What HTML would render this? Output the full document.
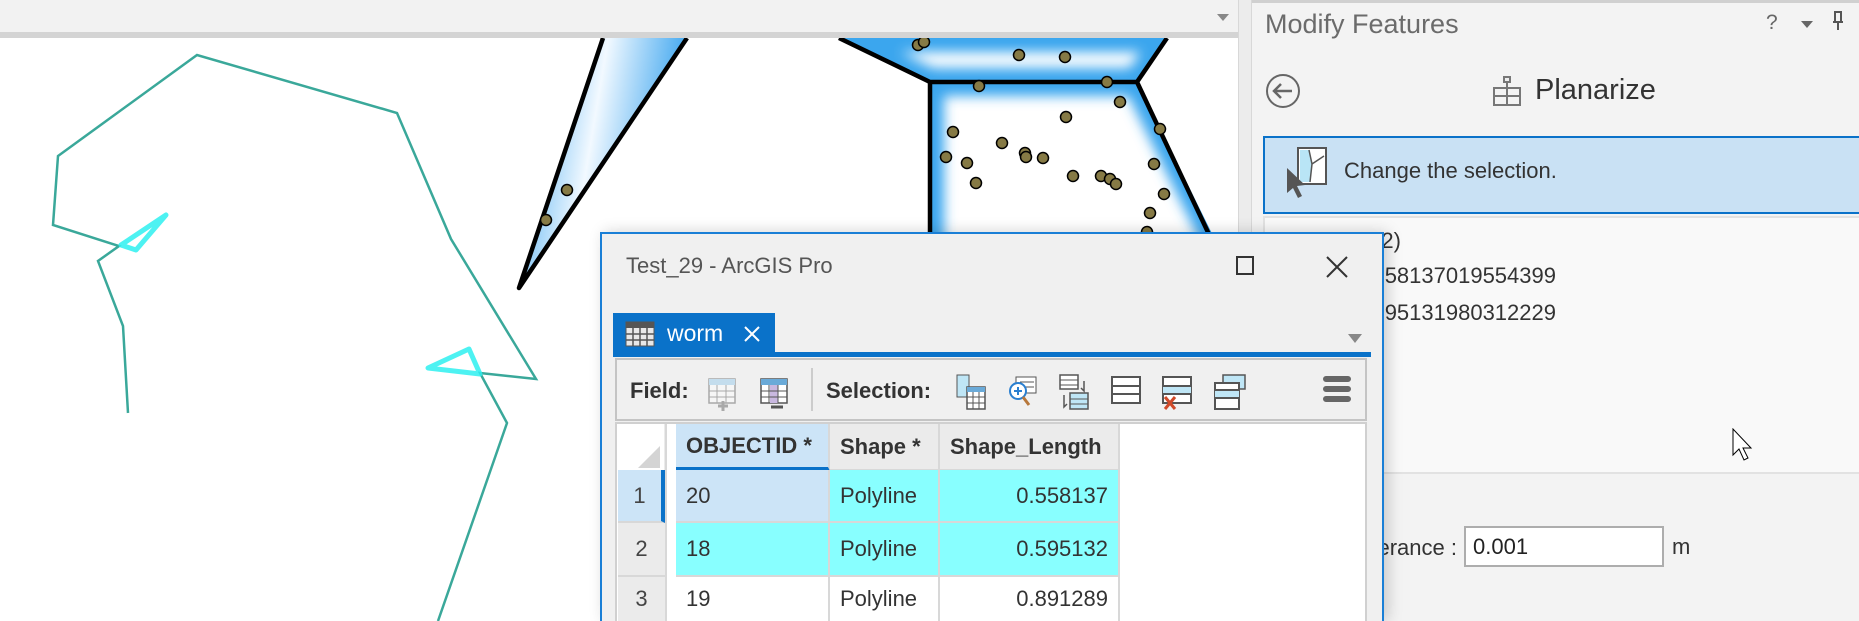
<!DOCTYPE html>
<html style="height:621px;overflow:hidden"><head><meta charset="utf-8"><style>
*{margin:0;padding:0;box-sizing:border-box}
body{width:1859px;height:621px;overflow:hidden;background:#fff;font-family:"Liberation Sans",sans-serif;position:relative}
.a{position:absolute}
.t{position:absolute;white-space:nowrap;line-height:1}
</style></head><body>
<!-- map -->
<svg class="a" style="left:0;top:0" width="1240" height="621" viewBox="0 0 1240 621">
<defs>
<clipPath id="c2"><polygon points="839,38 930,82 1137,82 1167,38"/></clipPath>
<clipPath id="c3"><polygon points="930,82 1137,82 1240,290 1240,621 930,621"/></clipPath>
<filter id="bl"><feGaussianBlur stdDeviation="6"/></filter>
<linearGradient id="sp" x1="0" y1="0" x2="1" y2="0.25"><stop offset="0" stop-color="#2f9fee"/><stop offset=".5" stop-color="#f2f9ff"/><stop offset="1" stop-color="#2f9fee"/></linearGradient>
</defs>
<rect width="1240" height="621" fill="#fff"/>
<polygon points="603,38 687,38 519,288" fill="url(#sp)"/>
<g clip-path="url(#c2)"><polygon points="839,38 930,82 1137,82 1167,38" fill="none" stroke="#3aa6ee" stroke-width="28" filter="url(#bl)"/></g>
<g clip-path="url(#c3)"><polygon points="930,82 1137,82 1240,290 1240,621 930,621" fill="none" stroke="#3aa6ee" stroke-width="28" filter="url(#bl)"/></g>
<g fill="none" stroke="#000" stroke-width="4.5" stroke-linejoin="round">
<polyline points="603,38 519,288 687,38"/>
<polyline points="839,38 930,82 1137,82 1167,38"/>
<polyline points="930,621 930,82"/>
<polyline points="1137,82 1240,300"/>
</g>
<g fill="#867a45" stroke="#000" stroke-width="1.5">
<circle cx="567" cy="190" r="5.5"/><circle cx="546" cy="220" r="5.5"/>
<circle cx="918" cy="45" r="5.5"/><circle cx="924" cy="42" r="5.5"/><circle cx="1019" cy="55" r="5.5"/><circle cx="1065" cy="57" r="5.5"/>
<circle cx="979" cy="86" r="5.5"/><circle cx="1107" cy="82" r="5.5"/><circle cx="1120" cy="102" r="5.5"/><circle cx="1066" cy="117" r="5.5"/>
<circle cx="1160" cy="129" r="5.5"/><circle cx="953" cy="132" r="5.5"/><circle cx="1002" cy="143" r="5.5"/><circle cx="946" cy="157" r="5.5"/>
<circle cx="1025" cy="153" r="5.5"/><circle cx="1026" cy="157" r="5.5"/><circle cx="1043" cy="158" r="5.5"/><circle cx="967" cy="163" r="5.5"/>
<circle cx="1154" cy="164" r="5.5"/><circle cx="1073" cy="176" r="5.5"/><circle cx="1101" cy="176" r="5.5"/><circle cx="1110" cy="179" r="5.5"/>
<circle cx="1116" cy="184" r="5.5"/><circle cx="976" cy="183" r="5.5"/><circle cx="1164" cy="194" r="5.5"/><circle cx="1150" cy="213" r="5.5"/><circle cx="1147" cy="232" r="5.5"/>
</g>
<polyline points="128,413 123,326 98,261 119,246 53,225 58,156 197,55 397,113 451,239 536,379 480,373 507,423 438,621" fill="none" stroke="#3aa89a" stroke-width="2.5"/>
<g fill="none" stroke="#2ef0f0" stroke-width="5" stroke-linejoin="round" opacity=".85">
<polygon points="166,215 121,245 136,250"/>
<polygon points="469,349 428,368 480,374"/>
</g>
<rect x="0" y="0" width="1240" height="32" fill="#f2f2f2"/>
<rect x="0" y="32" width="1240" height="6" fill="#d4d4d4"/>
<polygon points="1217,14 1229,14 1223,21" fill="#888"/>
</svg>
<div class="a" style="left:1238px;top:0;width:14px;height:621px;background:#ececec;border-left:1px solid #d8d8d8;border-right:1px solid #d8d8d8"></div>
<!-- right panel -->
<div class="a" style="left:1252px;top:0;width:607px;height:621px;background:#f3f3f3;border-top:3px solid #d0d0d0"></div>
<div class="t" style="left:1265px;top:11px;font-size:27px;color:#6b6b6b">Modify Features</div>
<div class="t" style="left:1766px;top:12px;font-size:21px;color:#666">?</div>
<div class="a" style="left:1801px;top:21px;width:0;height:0;border-left:6px solid transparent;border-right:6px solid transparent;border-top:7px solid #666"></div>
<svg class="a" style="left:1830px;top:10px" width="16" height="22"><path d="M4 2h8M5 2v10M11 2v10M3 12h10M8 12v8" stroke="#555" stroke-width="2" fill="none"/></svg>
<svg class="a" style="left:1265px;top:73px" width="36" height="36"><circle cx="18" cy="18" r="16" fill="none" stroke="#666" stroke-width="2"/><path d="M27 18H10M16 11l-7 7 7 7" fill="none" stroke="#666" stroke-width="2.5"/></svg>
<svg class="a" style="left:1492px;top:76px" width="32" height="32"><g fill="none" stroke="#777" stroke-width="2"><rect x="2" y="12" width="26" height="17"/><path d="M15 3v26M2 20h26"/><rect x="12" y="1" width="6" height="5" fill="#eee"/></g></svg>
<div class="t" style="left:1535px;top:76px;font-size:29px;color:#333">Planarize</div>
<div class="a" style="left:1263px;top:136px;width:600px;height:78px;background:#c9e1f4;border:2px solid #0a72c9"></div>
<svg class="a" style="left:1284px;top:146px" width="46" height="60"><path d="M14 2h28v36H14z" fill="#fff" stroke="#555" stroke-width="2"/><path d="M16 4h9l3 14-2 18H16z" fill="#b9e5f6"/><path d="M25 4l3 14-2 18M28 18l12-8" stroke="#555" stroke-width="1.5" fill="none"/><path d="M3 22l18 17-8 1 5 10-4 2-5-10-6 5z" fill="#555"/></svg>
<div class="t" style="left:1344px;top:160px;font-size:22px;color:#333">Change the selection.</div>
<div class="a" style="left:1263px;top:216px;width:600px;height:258px;background:#f9f9f9;border-top:2px solid #e2e2e2;border-bottom:2px solid #e2e2e2;border-left:2px solid #e2e2e2"></div>
<div class="t" style="right:458px;top:230px;font-size:22px;color:#333">Features (2)</div>
<div class="t" style="right:303px;top:265px;font-size:22px;color:#333">Length: 0.558137019554399</div>
<div class="t" style="right:303px;top:302px;font-size:22px;color:#333">Length: 0.595131980312229</div>
<svg class="a" style="left:1732px;top:428px" width="24" height="38"><path d="M1 1v26l6-6 5 11 4-2-5-10h8z" fill="#fff" stroke="#000" stroke-width="1"/></svg>
<div class="t" style="right:402px;top:537px;font-size:22px;color:#333">Tolerance :</div>
<div class="a" style="left:1464px;top:526px;width:200px;height:41px;background:#fff;border:2px solid #adadad"></div>
<div class="t" style="left:1473px;top:536px;font-size:22px;color:#222">0.001</div>
<div class="t" style="left:1672px;top:536px;font-size:22px;color:#333">m</div>
<!-- dialog -->
<div class="a" style="left:600px;top:232px;width:784px;height:389px;background:#f0f0f0;border:2px solid #1a7fd6;border-bottom:none;box-shadow:4px 0 14px rgba(0,0,0,.18)"></div>
<div class="t" style="left:626px;top:255px;font-size:22px;color:#555">Test_29 - ArcGIS Pro</div>
<div class="a" style="left:1236px;top:256px;width:18px;height:19px;border:2px solid #333"></div>
<svg class="a" style="left:1325px;top:255px" width="24" height="24"><path d="M2 2l20 20M22 2L2 22" stroke="#333" stroke-width="2"/></svg>
<div class="a" style="left:613px;top:313px;width:162px;height:40px;background:#0a72c9"></div>
<div class="a" style="left:613px;top:352px;width:758px;height:5px;background:#0a72c9"></div>
<svg class="a" style="left:625px;top:321px" width="30" height="26"><rect x="1" y="1" width="28" height="24" fill="#e8e8e8" stroke="#555"/><rect x="1" y="1" width="28" height="6" fill="#555"/><path d="M1 13h28M1 19h28M8 7v18M15 7v18M22 7v18" stroke="#555" stroke-width="1.5"/></svg>
<div class="t" style="left:667px;top:322px;font-size:23px;color:#fff">worm</div>
<svg class="a" style="left:743px;top:325px" width="18" height="18"><path d="M2 2l14 14M16 2L2 16" stroke="#fff" stroke-width="2"/></svg>
<div class="a" style="left:1348px;top:334px;width:0;height:0;border-left:7px solid transparent;border-right:7px solid transparent;border-top:9px solid #888"></div>
<div class="a" style="left:615px;top:358px;width:752px;height:63px;border:2px solid #c4c4c4;background:#f0f0f0"></div>
<div class="t" style="left:630px;top:380px;font-size:22px;font-weight:bold;color:#333">Field:</div>
<svg class="a" style="left:707px;top:377px" width="32" height="36"><g opacity=".45"><rect x="2" y="2" width="26" height="24" fill="#fff" stroke="#555" stroke-width="1.5"/><rect x="2" y="2" width="26" height="6" fill="#8fc7ea"/><path d="M2 14h26M2 20h26M10 8v18M19 8v18" stroke="#555"/><path d="M11 29h10M16 24v10" stroke="#555" stroke-width="3"/></g></svg>
<svg class="a" style="left:759px;top:377px" width="32" height="36"><rect x="2" y="2" width="26" height="24" fill="#fff" stroke="#555" stroke-width="1.5"/><rect x="2" y="2" width="26" height="6" fill="#6aaad8"/><rect x="11" y="8" width="8" height="18" fill="#c9b8e0"/><path d="M2 14h26M2 20h26M10 8v18M19 8v18" stroke="#555"/><path d="M12 30h12" stroke="#555" stroke-width="3"/></svg>
<div class="a" style="left:811px;top:368px;width:2px;height:43px;background:#ccc"></div>
<div class="t" style="left:826px;top:380px;font-size:22px;font-weight:bold;color:#333">Selection:</div>
<svg class="a" style="left:955px;top:373px" width="34" height="40"><path d="M2 2h12v22H2z" fill="#bfe6f6" stroke="#555"/><rect x="12" y="14" width="18" height="22" fill="#fff" stroke="#555" stroke-width="1.5"/><rect x="12" y="14" width="18" height="5" fill="#6aaad8"/><path d="M12 24h18M12 30h18M18 19v17M24 19v17" stroke="#555"/></svg>
<svg class="a" style="left:1006px;top:373px" width="34" height="40"><path d="M10 4h20v16H10z" fill="#fff" stroke="#555"/><path d="M14 9h14M14 14h14" stroke="#555"/><circle cx="12" cy="18" r="8" fill="#fff" stroke="#2a7fd0" stroke-width="2"/><path d="M8 18h8M12 14v8" stroke="#2a7fd0" stroke-width="2"/><path d="M17 24l6 8" stroke="#b7773b" stroke-width="3"/></svg>
<svg class="a" style="left:1058px;top:373px" width="34" height="40"><rect x="2" y="2" width="18" height="14" fill="#fff" stroke="#555" stroke-width="1.5"/><path d="M2 7h18M2 12h18" stroke="#555"/><rect x="12" y="20" width="18" height="16" fill="#bfe6f6" stroke="#555" stroke-width="1.5"/><path d="M12 26h18M12 31h18" stroke="#555"/><path d="M26 8v10l-3-3M6 22v12l3-3" stroke="#555" stroke-width="1.5" fill="none"/></svg>
<svg class="a" style="left:1110px;top:375px" width="32" height="36"><rect x="2" y="2" width="28" height="26" fill="#fff" stroke="#555" stroke-width="2"/><path d="M2 11h28M2 19h28" stroke="#555" stroke-width="2"/></svg>
<svg class="a" style="left:1161px;top:375px" width="32" height="38"><rect x="2" y="2" width="28" height="26" fill="#fff" stroke="#555" stroke-width="2"/><rect x="2" y="11" width="28" height="8" fill="#bfe6f6"/><path d="M2 11h28M2 19h28" stroke="#555" stroke-width="2"/><path d="M4 22l10 12M14 22L4 34" stroke="#d04a2a" stroke-width="3"/></svg>
<svg class="a" style="left:1213px;top:373px" width="34" height="40"><rect x="10" y="2" width="22" height="14" fill="#bfe6f6" stroke="#555" stroke-width="1.5"/><rect x="2" y="10" width="24" height="26" fill="#fff" stroke="#555" stroke-width="2"/><rect x="2" y="17" width="24" height="8" fill="#bfe6f6"/><path d="M2 17h24M2 25h24" stroke="#555" stroke-width="2"/></svg>
<svg class="a" style="left:1322px;top:374px" width="32" height="32"><g stroke="#666" stroke-width="6" stroke-linecap="round"><path d="M4 5h22M4 15h22M4 25h22"/></g></svg>
<!-- grid -->
<div class="a" style="left:615px;top:422px;width:752px;height:199px;background:#fff;border:2px solid #d0d0d0;border-bottom:none"></div>
<div class="a" style="left:618px;top:424px;width:47px;height:197px;background:#ebebeb"></div>
<div class="a" style="left:618px;top:424px;width:46px;height:46px;background:#fff"></div>
<svg class="a" style="left:638px;top:446px" width="24" height="22"><polygon points="22,0 22,22 0,22" fill="#d4d4d4"/></svg>
<div class="a" style="left:665px;top:424px;width:10px;height:197px;background:#fff;border-left:2px solid #d8d8d8"></div>
<style>
.c{position:absolute;font-size:22px;color:#333;line-height:1;display:flex;align-items:center;padding:0 10px;border-right:2px solid #d8d8d8;border-bottom:2px solid #d8d8d8}
.h{font-weight:bold;background:#ebebeb}
.cy{background:#88ffff}
.sb{background:#cce4f7}
.r{justify-content:flex-end}
.rh{position:absolute;left:618px;width:47px;font-size:22px;color:#444;display:flex;align-items:center;justify-content:center;border-bottom:2px solid #d8d8d8}
</style>
<div class="c h sb" style="left:676px;top:424px;width:154px;height:47px;border-bottom:4px solid #0a72c9">OBJECTID *</div>
<div class="c h" style="left:830px;top:424px;width:110px;height:47px">Shape *</div>
<div class="c h" style="left:940px;top:424px;width:180px;height:47px">Shape_Length</div>
<div class="rh sb" style="top:470px;height:53px;border-right:4px solid #0a72c9">1</div>
<div class="rh" style="top:523px;height:54px">2</div>
<div class="rh" style="top:577px;height:44px;border-bottom:none">3</div>
<div class="c sb" style="left:676px;top:470px;width:154px;height:53px">20</div>
<div class="c cy" style="left:830px;top:470px;width:110px;height:53px">Polyline</div>
<div class="c cy r" style="left:940px;top:470px;width:180px;height:53px">0.558137</div>
<div class="c cy" style="left:676px;top:523px;width:154px;height:54px">18</div>
<div class="c cy" style="left:830px;top:523px;width:110px;height:54px">Polyline</div>
<div class="c cy r" style="left:940px;top:523px;width:180px;height:54px">0.595132</div>
<div class="c" style="left:676px;top:577px;width:154px;height:44px;border-bottom:none">19</div>
<div class="c" style="left:830px;top:577px;width:110px;height:44px;border-bottom:none">Polyline</div>
<div class="c r" style="left:940px;top:577px;width:180px;height:44px;border-bottom:none">0.891289</div>
</body></html>
